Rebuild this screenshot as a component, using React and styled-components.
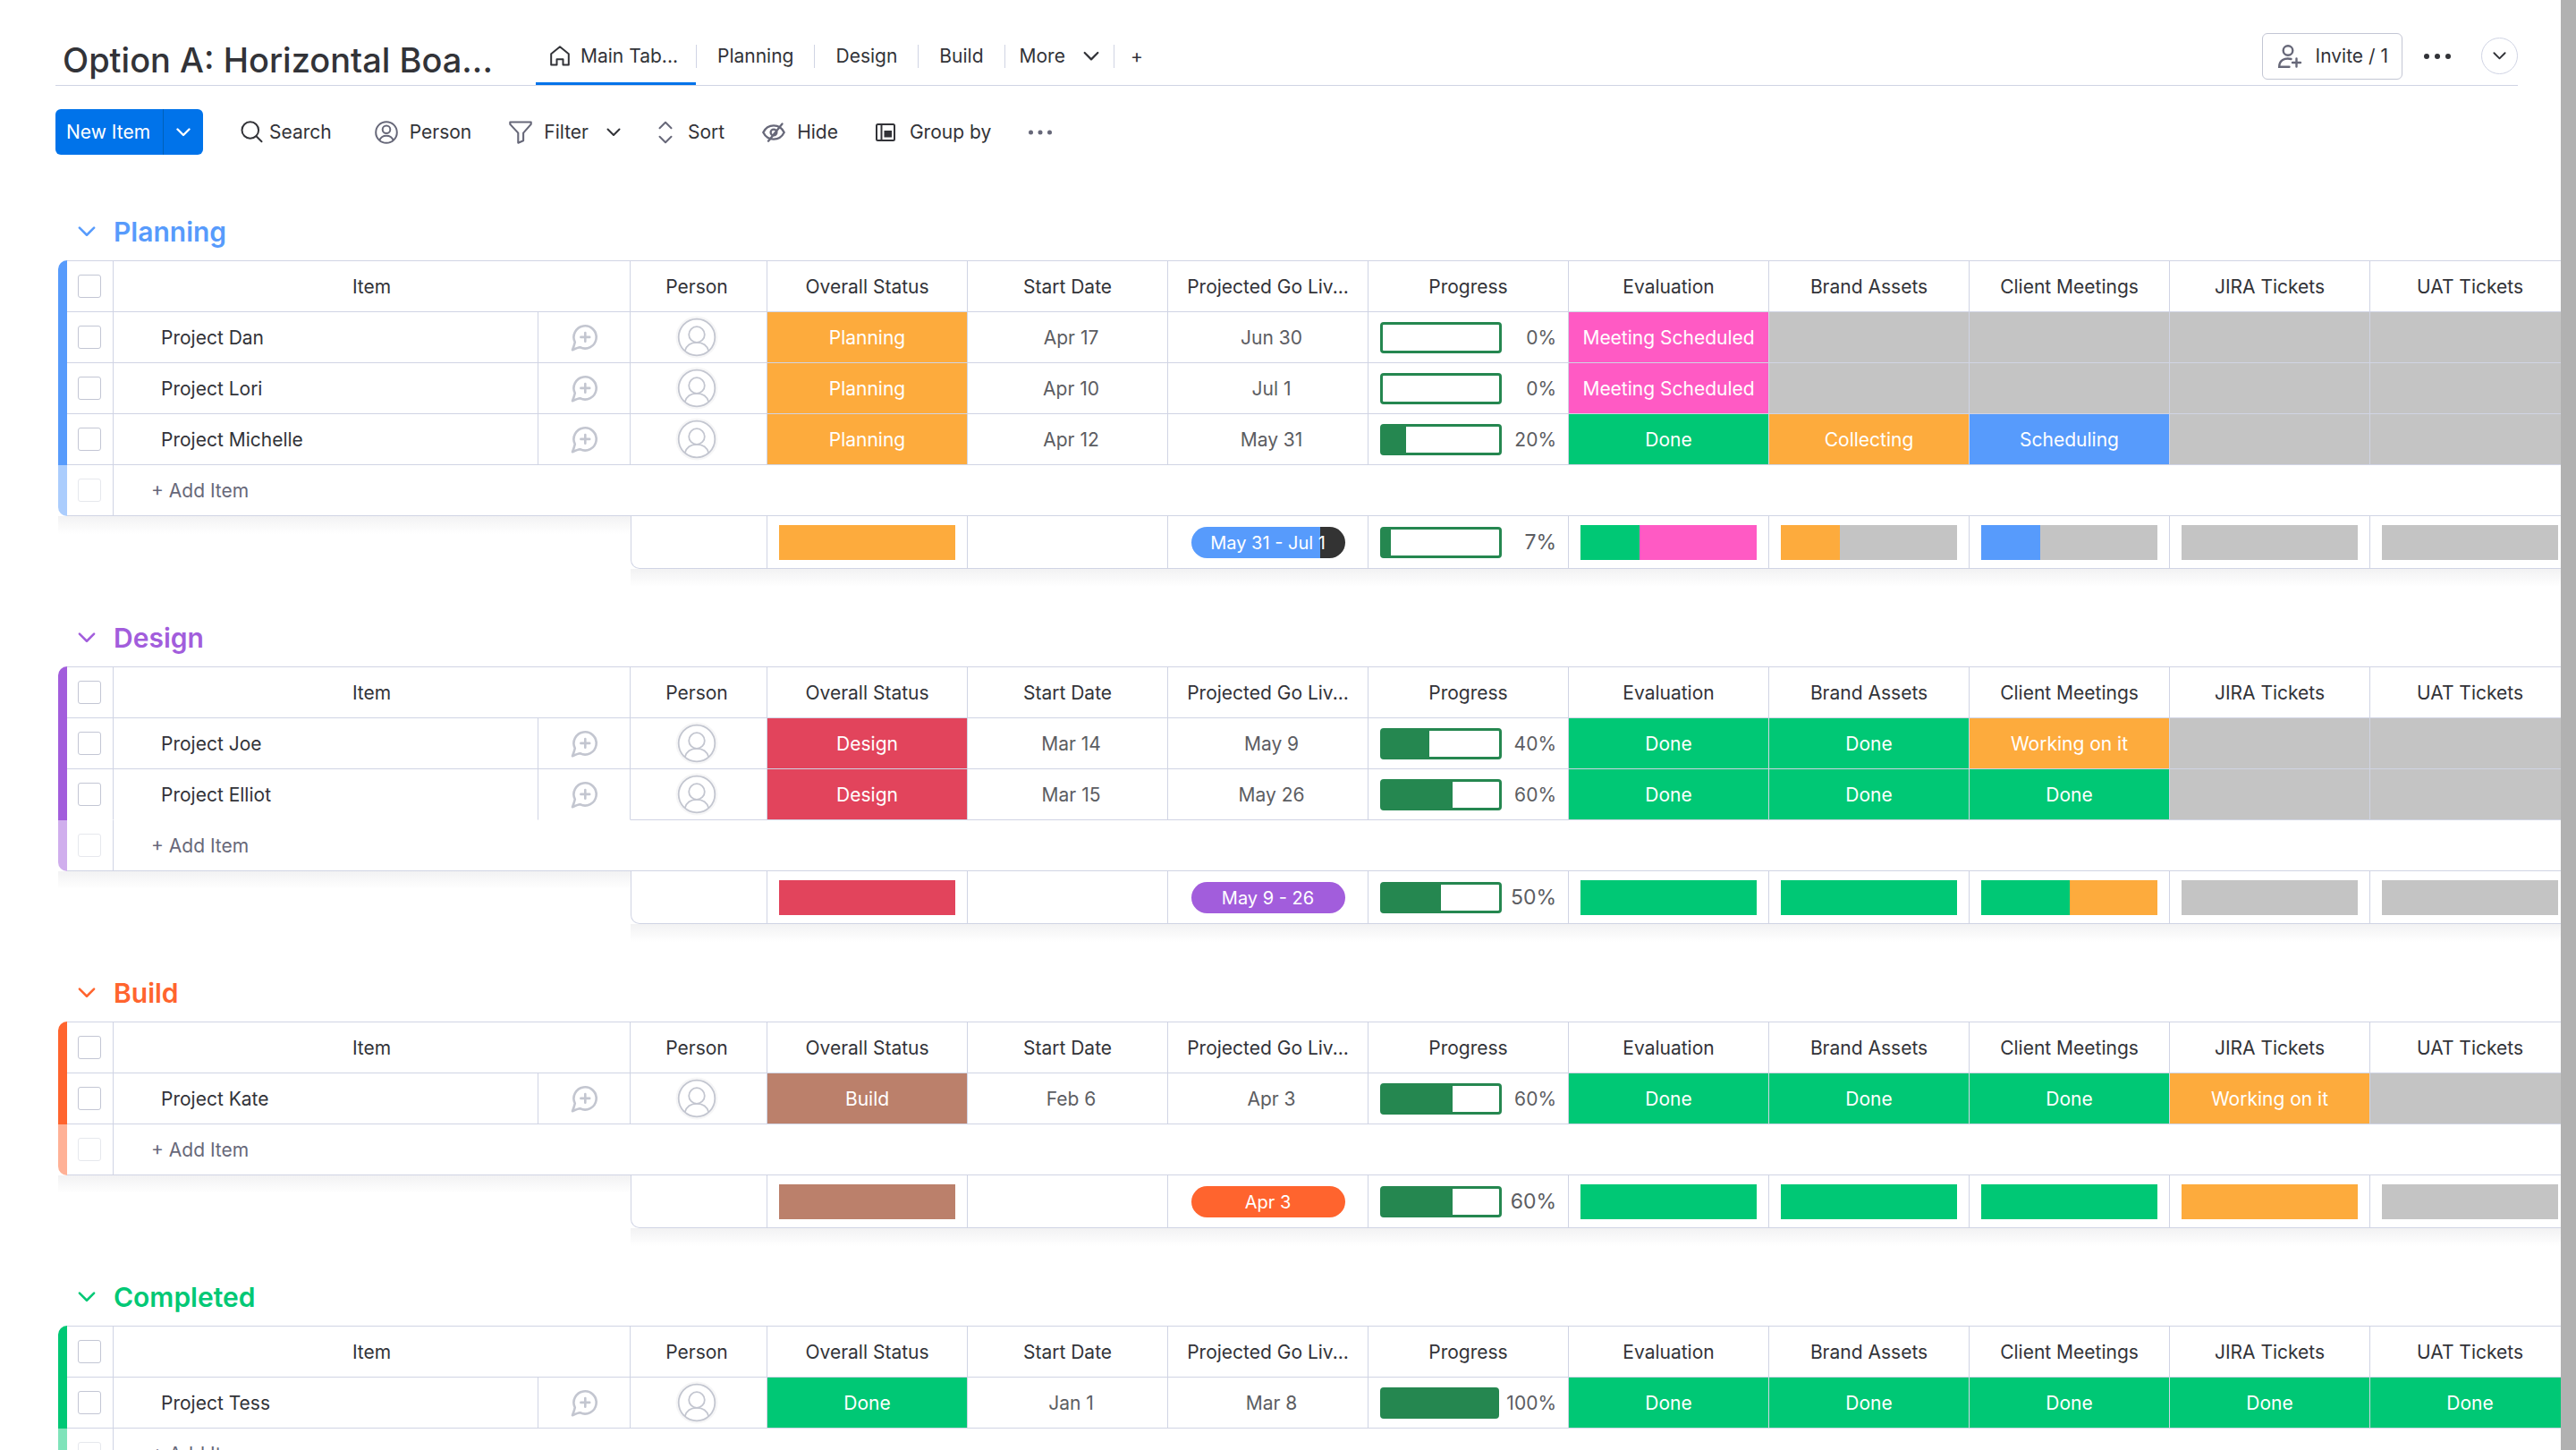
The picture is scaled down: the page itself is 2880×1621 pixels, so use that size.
import React from 'react'
import styled, { createGlobalStyle } from 'styled-components';

const GlobalStyle = createGlobalStyle`
    * {
        box-sizing: border-box;
    }
    body {
        margin: 0;
        background: #ffffff;
        color: #323338;
        font-family: Inter, "Liberation Sans", sans-serif;
        font-size: 21px;
    }
    button {
        padding: 0;
        border: none;
        background: none;
        color: inherit;
        font: inherit;
        cursor: pointer;
    }
`
const line = '#d0d4e4';

const colors = {
    orange: '#fdab3d',
    green: '#00c875',
    pink: '#ff5ac4',
    blue: '#579bfc',
    red: '#e2445c',
    brown: '#bb806b',
    purple: '#a25ddc',
    flame: '#ff642e',
    grey: '#c4c4c4',
}

const Page = styled.div`
    display: flex;
    height: 100vh;
    overflow: hidden;
`
const Board = styled.main`
    flex: 1;
    min-width: 0;
    overflow: hidden;
`
const ScrollTrack = styled.div`
    flex: 0 0 17px;
    background: #b1b1b1;
`

/* header */

const Header = styled.header`
    display: flex;
    height: 96px;
    margin: 0 48px 0 62px;
    border-bottom: 1px solid ${line};
`
const Title = styled.h1`
    flex: 0 0 537px;
    display: flex;
    align-items: center;
    margin: 0;
    padding: 38px 0 0 8px;
    font-size: 38px;
    font-weight: 500;
    white-space: nowrap;
`
const Tabs = styled.nav`
    flex: 1;
    display: flex;
    align-items: center;
    padding-top: 30px;
`
const Tab = styled.button`
    display: flex;
    align-items: center;
    gap: ${p => p.$gap || 12}px;
    height: 100%;
    min-width: ${p => (p.$active ? 179 : 0)}px;
    padding: 0 ${p => p.$pad || 23}px;
    border-bottom: 3px solid ${p => (p.$active ? '#0073ea' : 'transparent')};
    border-top: 3px solid transparent;
    white-space: nowrap;
`
const TabDivider = styled.span`
    width: 1px;
    height: 26px;
    background: ${line};
`
const HeaderActions = styled.div`
    display: flex;
    align-items: center;
    padding-top: 30px;
    gap: 24px;
`
const InviteButton = styled.button`
    display: flex;
    align-items: center;
    gap: 15px;
    height: 52px;
    padding: 0 15px 0 16px;
    border: 1px solid #c3c6d4;
    border-radius: 6px;
    white-space: nowrap;
`
const MoreButton = styled.button`
    display: flex;
    margin-right: 10px;
`
const RoundButton = styled.button`
    display: flex;
    align-items: center;
    justify-content: center;
    width: 41px;
    height: 41px;
    border: 1px solid ${line};
    border-radius: 50%;
`

/* toolbar */

const Toolbar = styled.div`
    display: flex;
    align-items: center;
    gap: 42px;
    padding: 26px 48px 54px 62px;
`
const NewItem = styled.div`
    display: flex;
    height: 51px;
    border-radius: 6px;
    overflow: hidden;
    background: #0073ea;
    color: #ffffff;
`
const NewItemButton = styled.button`
    padding: 0 14px 0 12px;
    border-right: 1px solid #0060b9;
`
const NewItemArrow = styled.button`
    display: flex;
    align-items: center;
    justify-content: center;
    width: 44px;
`
const Tool = styled.button`
    display: flex;
    align-items: center;
    gap: ${p => p.$gap || 13}px;
    padding-right: ${p => p.$end || 0}px;
    white-space: nowrap;
`
const ToolGroup = styled.div`
    display: flex;
    align-items: center;
    gap: 20px;
`

/* groups */

const Group = styled.section`
    padding-left: 65px;
    margin-bottom: 25px;
`
const GroupHeader = styled.div`
    display: flex;
    align-items: center;
    gap: 20px;
    height: 64px;
    padding-left: 22px;
    color: ${p => p.$color};
`
const CollapseButton = styled.button`
    display: flex;
`
const GroupTitle = styled.h2`
    margin: 0;
    font-size: 30px;
    font-weight: 600;
`
const Table = styled.table`
    table-layout: fixed;
    width: 2809px;
    border-collapse: separate;
    border-spacing: 0;
`
const BarCell = styled.td`
    padding: 0;
    background: ${p => p.$color};
    opacity: ${p => (p.$faded ? 0.5 : 1)};
    border-radius: ${p => (p.$top ? '10px 0 0 0' : p.$faded ? '0 0 0 10px' : 0)};
`
const HeadCell = styled.th`
    height: 58px;
    padding: 0 ${p => p.$end || 0}px 0 0;
    border: solid ${line};
    border-width: 1px 1px 1px 0;
    font-weight: 400;
    white-space: nowrap;
`
const Cell = styled.td`
    height: 57px;
    padding: 0 ${p => p.$end || 0}px 0 0;
    border: solid ${line};
    border-width: 0 1px 1px 0;
    border-bottom-color: ${p => (p.$open ? 'transparent' : line)};
    text-align: center;
    white-space: nowrap;
`
const NameCell = styled(Cell)`
    padding-left: 53px;
    text-align: left;
`
const DateCell = styled(Cell)`
    padding-left: 8px;
    color: #5c5d62;
`
const StatusCell = styled(Cell)`
    background: ${p => p.$color};
    color: #ffffff;
`
const ProgressCell = styled(Cell)`
    padding: 0 13px;
`
const AddCell = styled(Cell)`
    padding-left: 42px;
    border-right: none;
    color: #676879;
    text-align: left;
`
const ShadowCell = styled.td`
    padding: 0;
    vertical-align: top;
`
const Shadow = styled.div`
    height: 20px;
    background: linear-gradient(#f2f2f3, #ffffff);
`
const SummaryCell = styled(Cell)`
    height: 59px;
    padding: 0 13px;
    border-left: ${p => (p.$first ? `1px solid ${line}` : 'none')};
    border-radius: ${p => (p.$first ? '0 0 0 10px' : 0)};
`
const Checkbox = styled.input`
    appearance: none;
    display: block;
    width: 26px;
    height: 26px;
    margin: 0 auto;
    border: 1px solid #c3c6d4;
    border-radius: 3px;
    background: #ffffff;
    opacity: ${p => (p.disabled ? 0.4 : 1)};
`
const IconButton = styled.button`
    display: block;
    margin: 0 auto;
    svg {
        display: block;
    }
`
const ProgressWrap = styled.div`
    display: flex;
    align-items: center;
    justify-content: space-between;
    gap: 8px;
    color: #5c5d62;
    font-size: ${p => (p.$large ? 23 : 21)}px;
`
const ProgressBox = styled.div`
    flex: 0 1 136px;
    height: 35px;
    border: 3px solid #258750;
    border-radius: 4px;
`
const ProgressFill = styled.div`
    height: 100%;
    background: #258750;
`
const Battery = styled.div`
    display: flex;
    height: 39px;
`
const BatteryPart = styled.div`
    flex: ${p => p.$share};
    background: ${p => p.$color};
`
const Pill = styled.div`
    width: 172px;
    height: 35px;
    margin: 0 auto;
    border-radius: 18px;
    background: ${p => (p.$done ? `linear-gradient(to right, ${p.$color} ${p.$done}%, #333333 ${p.$done}%)` : p.$color)};
    color: #ffffff;
    font-size: 20px;
    line-height: 37px;
`

/* icons */

const Chevron = ({ size = 16, width = 2 }) => (
    <svg width={size} height={size} viewBox="0 0 16 16" fill="none" stroke="currentColor" strokeWidth={width} strokeLinecap="round" strokeLinejoin="round">
        <path d="M1.5 4.5 8 11l6.5-6.5" />
    </svg>
)

const Dots = ({ width, r, color }) => (
    <svg width={width} height="8" viewBox={`0 0 ${width} 8`} fill={color}>
        <circle cx={r} cy="4" r={r} />
        <circle cx={width / 2} cy="4" r={r} />
        <circle cx={width - r} cy="4" r={r} />
    </svg>
)

const HomeIcon = () => (
    <svg width="22" height="23" viewBox="0 0 22 23" fill="none" stroke="#323338" strokeWidth="2" strokeLinejoin="round">
        <path d="M1.2 9.2 11 1.3l9.8 7.9v12.3h-6.3v-6.3h-7v6.3H1.2z" />
    </svg>
)

const InviteIcon = () => (
    <svg width="28" height="28" viewBox="0 0 28 28" fill="none" stroke="#676879" strokeWidth="2.4" strokeLinecap="round">
        <circle cx="12" cy="7.5" r="5.3" />
        <path d="M15.5 17c-7.5-1.6-13.3 1.5-13.3 8.8h11.3M21.5 16.5v9M17 21h9" />
    </svg>
)

const SearchIcon = () => (
    <svg width="25" height="25" viewBox="0 0 25 25" fill="none" stroke="#323338" strokeWidth="2" strokeLinecap="round">
        <circle cx="10.8" cy="10.5" r="9.3" />
        <path d="m17.5 17.3 6 6" />
    </svg>
)

const PersonIcon = () => (
    <svg width="26" height="26" viewBox="0 0 26 26" fill="none" stroke="#676879" strokeWidth="2">
        <circle cx="13" cy="13" r="11.8" />
        <circle cx="13" cy="9.7" r="4.3" />
        <path d="M5.3 21.8c1.4-3.4 4.3-5 7.7-5s6.3 1.6 7.7 5" />
    </svg>
)

const FilterIcon = () => (
    <svg width="26" height="26" viewBox="0 0 26 26" fill="none" stroke="#676879" strokeWidth="2.1" strokeLinejoin="round">
        <path d="M1.3 1.5h23.400v2.400l-8.600 9.700v8.600L10.300 24.700V13.600L1.300 3.900z" />
    </svg>
)

const SortIcon = () => (
    <svg width="16" height="26" viewBox="0 0 16 26" fill="none" stroke="#676879" strokeWidth="2" strokeLinecap="round" strokeLinejoin="round">
        <path d="M1.5 8.2 8 1.7l6.5 6.5M1.5 17.8 8 24.3l6.5-6.5" />
    </svg>
)

const HideIcon = () => (
    <svg width="26" height="22" viewBox="0 0 26 22" fill="none" stroke="#676879" strokeWidth="2.3" strokeLinecap="round">
        <path d="M1.3 11C3.800 6 8 3.400 13 3.400S22.200 6 24.700 11C22.200 16 18 18.600 13 18.600S3.800 16 1.300 11z" />
        <circle cx="13" cy="11" r="3.4" />
        <path d="M22.5 1.5 7 20.7" />
    </svg>
)

const GroupIcon = () => (
    <svg width="22" height="20" viewBox="0 0 22 20" fill="none" stroke="#323338" strokeWidth="2">
        <rect x="1" y="1" width="20" height="18" rx="1.5" />
        <path d="M6.5 1v18" />
        <rect x="10.5" y="9" width="6.5" height="5.5" fill="#323338" />
    </svg>
)

const UpdateIcon = () => (
    <svg width="31" height="31" viewBox="0 0 31 31" fill="none" stroke="#c3c6d0" strokeWidth="2.6" strokeLinecap="round" strokeLinejoin="round">
        <path d="M4.8 20.5A12.6 12.6 0 1 1 10.5 26.2Q8 26.5 2 29.2 4 24 4.8 20.5z" />
        <path d="M16.3 10v9.8M11.4 14.9h9.8" />
    </svg>
)

const Avatar = () => (
    <svg width="48" height="48" viewBox="0 0 48 48" fill="none" stroke="#c3c6d0" strokeWidth="1.8">
        <circle cx="24" cy="24" r="23.5" fill="#f6f6f7" stroke="none" />
        <circle cx="24" cy="24" r="20.3" fill="#ffffff" />
        <circle cx="24" cy="21" r="8.8" />
        <path d="M10.8 39.2C12.5 33 17.5 29.8 24 29.8s11.5 3.2 13.2 9.4" />
    </svg>
)

/* data */

const status = {
    Planning: colors.orange,
    Design: colors.red,
    Build: colors.brown,
    Done: colors.green,
    'Meeting Scheduled': colors.pink,
    Collecting: colors.orange,
    'Working on it': colors.orange,
    Scheduling: colors.blue,
}

const columns = ['Overall Status', 'Start Date', 'Projected Go Liv...', 'Progress', 'Evaluation', 'Brand Assets', 'Client Meetings', 'JIRA Tickets', 'UAT Tickets']

const { green, grey, orange, pink, blue } = colors

const groups = [
    {
        name: 'Planning',
        color: colors.blue,
        rows: [
            { name: 'Project Dan', overall: 'Planning', start: 'Apr 17', live: 'Jun 30', progress: 0, steps: ['Meeting Scheduled', '', '', '', ''] },
            { name: 'Project Lori', overall: 'Planning', start: 'Apr 10', live: 'Jul 1', progress: 0, steps: ['Meeting Scheduled', '', '', '', ''] },
            { name: 'Project Michelle', overall: 'Planning', start: 'Apr 12', live: 'May 31', progress: 20, steps: ['Done', 'Collecting', 'Scheduling', '', ''] },
        ],
        summary: {
            overall: orange, range: 'May 31 - Jul 1', done: 84, progress: 7,
            steps: [[[green, 1], [pink, 2]], [[orange, 1], [grey, 2]], [[blue, 1], [grey, 2]], [[grey, 1]], [[grey, 1]]],
        },
    },
    {
        name: 'Design',
        color: colors.purple,
        openEnd: true,
        rows: [
            { name: 'Project Joe', overall: 'Design', start: 'Mar 14', live: 'May 9', progress: 40, steps: ['Done', 'Done', 'Working on it', '', ''] },
            { name: 'Project Elliot', overall: 'Design', start: 'Mar 15', live: 'May 26', progress: 60, steps: ['Done', 'Done', 'Done', '', ''] },
        ],
        summary: {
            overall: colors.red, range: 'May 9 - 26', progress: 50,
            steps: [[[green, 1]], [[green, 1]], [[green, 1], [orange, 1]], [[grey, 1]], [[grey, 1]]],
        },
    },
    {
        name: 'Build',
        color: colors.flame,
        rows: [
            { name: 'Project Kate', overall: 'Build', start: 'Feb 6', live: 'Apr 3', progress: 60, steps: ['Done', 'Done', 'Done', 'Working on it', ''] },
        ],
        summary: {
            overall: colors.brown, range: 'Apr 3', progress: 60,
            steps: [[[green, 1]], [[green, 1]], [[green, 1]], [[orange, 1]], [[grey, 1]]],
        },
    },
    {
        name: 'Completed',
        color: colors.green,
        rows: [
            { name: 'Project Tess', overall: 'Done', start: 'Jan 1', live: 'Mar 8', progress: 100, steps: ['Done', 'Done', 'Done', 'Done', 'Done'] },
        ],
    },
]

const Progress = ({ value, large }) => (
    <ProgressWrap $large={large}>
        <ProgressBox>
            <ProgressFill style={{ width: `${value}%` }} />
        </ProgressBox>
        {value}%
    </ProgressWrap>
)

const BatteryBar = ({ parts }) => (
    <Battery>
        {parts.map(([color, share]) => <BatteryPart key={color} $color={color} $share={share} />)}
    </Battery>
)

function ItemRow({ row, color, open }) {
    return (
        <tr>
            <BarCell $color={color} />
            <Cell $open={open} $end={2}><Checkbox type="checkbox" aria-label={`Select ${row.name}`} /></Cell>
            <NameCell $open={open}>{row.name}</NameCell>
            <Cell $open={open}>
                <IconButton aria-label={`Add update to ${row.name}`}><UpdateIcon /></IconButton>
            </Cell>
            <Cell $end={4}>
                <IconButton aria-label={`Assign ${row.name}`}><Avatar /></IconButton>
            </Cell>
            <StatusCell $color={status[row.overall]}>{row.overall}</StatusCell>
            <DateCell>{row.start}</DateCell>
            <DateCell>{row.live}</DateCell>
            <ProgressCell><Progress value={row.progress} /></ProgressCell>
            {row.steps.map((step, i) => (
                <StatusCell key={i} $color={status[step] || grey}>{step}</StatusCell>
            ))}
        </tr>
    )
}

function Summary({ summary, color }) {
    return (
        <tfoot>
            <tr>
                <ShadowCell colSpan={4}><Shadow /></ShadowCell>
                <SummaryCell $first />
                <SummaryCell><BatteryBar parts={[[summary.overall, 1]]} /></SummaryCell>
                <SummaryCell />
                <SummaryCell><Pill $color={color} $done={summary.done}>{summary.range}</Pill></SummaryCell>
                <SummaryCell><Progress value={summary.progress} large /></SummaryCell>
                {summary.steps.map((parts, i) => (
                    <SummaryCell key={i}><BatteryBar parts={parts} /></SummaryCell>
                ))}
            </tr>
            <tr>
                <ShadowCell colSpan={4} />
                <ShadowCell colSpan={10}><Shadow /></ShadowCell>
            </tr>
        </tfoot>
    )
}

function BoardGroup({ group }) {
    return (
        <Group>
            <GroupHeader $color={group.color}>
                <CollapseButton aria-label={`Collapse ${group.name}`}><Chevron size={20} /></CollapseButton>
                <GroupTitle>{group.name}</GroupTitle>
            </GroupHeader>
            <Table>
                <colgroup>
                    <col width="10" />
                    <col width="52" />
                    <col width="475" />
                    <col width="103" />
                    <col width="153" />
                    {columns.map(c => <col key={c} width="224" />)}
                </colgroup>
                <thead>
                    <tr>
                        <BarCell $color={group.color} $top />
                        <HeadCell $end={2}><Checkbox type="checkbox" aria-label={`Select all in ${group.name}`} /></HeadCell>
                        <HeadCell colSpan={2}>Item</HeadCell>
                        <HeadCell $end={4}>Person</HeadCell>
                        {columns.map(c => <HeadCell key={c}>{c}</HeadCell>)}
                    </tr>
                </thead>
                <tbody>
                    {group.rows.map((row, i) => (
                        <ItemRow key={row.name} row={row} color={group.color} open={group.openEnd && i === group.rows.length - 1} />
                    ))}
                    <tr>
                        <BarCell $color={group.color} $faded />
                        <Cell $end={2}><Checkbox type="checkbox" disabled aria-label="New item" /></Cell>
                        <AddCell colSpan={12}><button>+ Add Item</button></AddCell>
                    </tr>
                </tbody>
                {group.summary && <Summary summary={group.summary} color={group.color} />}
            </Table>
        </Group>
    )
}

export default function App() {
    return (
        <Page>
            <GlobalStyle />
            <Board>
                <Header>
                    <Title>Option A: Horizontal Boa...</Title>
                    <Tabs>
                        <Tab $active $pad={16}><HomeIcon />Main Tab...</Tab>
                        <TabDivider />
                        <Tab>Planning</Tab>
                        <TabDivider />
                        <Tab>Design</Tab>
                        <TabDivider />
                        <Tab>Build</Tab>
                        <TabDivider />
                        <Tab $pad={16} $gap={20}>More <Chevron size={18} /></Tab>
                        <TabDivider />
                        <Tab $pad={18}>+</Tab>
                    </Tabs>
                    <HeaderActions>
                        <InviteButton><InviteIcon />Invite / 1</InviteButton>
                        <MoreButton aria-label="Board options"><Dots width={30} r={3} color="#323338" /></MoreButton>
                        <RoundButton aria-label="Collapse header"><Chevron size={15} /></RoundButton>
                    </HeaderActions>
                </Header>
                <Toolbar>
                    <NewItem>
                        <NewItemButton>New Item</NewItemButton>
                        <NewItemArrow aria-label="New item options"><Chevron width={2.4} /></NewItemArrow>
                    </NewItem>
                    <Tool $gap={7} $end={6}><SearchIcon />Search</Tool>
                    <Tool><PersonIcon />Person</Tool>
                    <ToolGroup>
                        <Tool><FilterIcon />Filter</Tool>
                        <Tool aria-label="Filter options"><Chevron /></Tool>
                    </ToolGroup>
                    <Tool $gap={17}><SortIcon />Sort</Tool>
                    <Tool><HideIcon />Hide</Tool>
                    <Tool $gap={16}><GroupIcon />Group by</Tool>
                    <Tool aria-label="More tools"><Dots width={26} r={2.5} color="#676879" /></Tool>
                </Toolbar>
                {groups.map(group => <BoardGroup key={group.name} group={group} />)}
            </Board>
            <ScrollTrack />
        </Page>
    )
}
